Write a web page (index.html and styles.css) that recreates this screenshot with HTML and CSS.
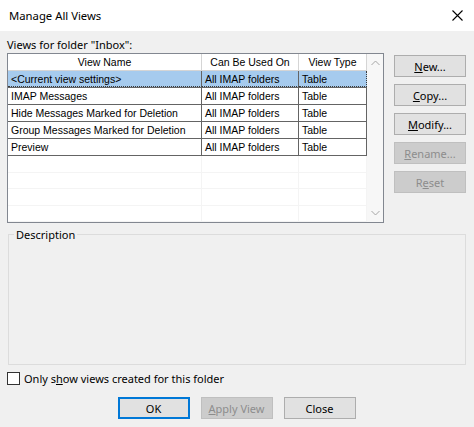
FILE: index.html
```html
<!DOCTYPE html>
<html>
<head>
<meta charset="utf-8">
<link rel="stylesheet" href="styles.css">
</head>
<body>
<div class="dialog">
  <div class="titlebar">
    <span class="title">Manage All Views</span>
    <svg class="close" width="11" height="11" viewBox="0 0 11 11"><path d="M0.5 0.5 L10.5 10.5 M10.5 0.5 L0.5 10.5" stroke="#000" stroke-width="1.1" fill="none"/></svg>
  </div>
  <div class="body">
    <div class="label">Views for folder "Inbox":</div>
    <div class="main">
      <div class="list">
        <div class="grid">
          <div class="row head">
            <div class="cell">View Name</div>
            <div class="cell">Can Be Used On</div>
            <div class="cell">View Type</div>
          </div>
          <div class="row sel">
            <div class="cell">&lt;Current view settings&gt;</div>
            <div class="cell">All IMAP folders</div>
            <div class="cell">Table</div>
          </div>
          <div class="row">
            <div class="cell">IMAP Messages</div>
            <div class="cell">All IMAP folders</div>
            <div class="cell">Table</div>
          </div>
          <div class="row">
            <div class="cell">Hide Messages Marked for Deletion</div>
            <div class="cell">All IMAP folders</div>
            <div class="cell">Table</div>
          </div>
          <div class="row">
            <div class="cell">Group Messages Marked for Deletion</div>
            <div class="cell">All IMAP folders</div>
            <div class="cell">Table</div>
          </div>
          <div class="row">
            <div class="cell">Preview</div>
            <div class="cell">All IMAP folders</div>
            <div class="cell">Table</div>
          </div>
          <div class="row empty"><div class="cell"></div><div class="cell"></div><div class="cell"></div></div>
          <div class="row empty"><div class="cell"></div><div class="cell"></div><div class="cell"></div></div>
          <div class="row empty"><div class="cell"></div><div class="cell"></div><div class="cell"></div></div>
          <div class="row empty"><div class="cell"></div><div class="cell"></div><div class="cell"></div></div>
        </div>
        <div class="scroll">
          <svg width="9" height="6" viewBox="0 0 9 6"><path d="M0.5 5 L4.5 1 L8.5 5" stroke="#a6a6a6" stroke-width="1" fill="none"/></svg>
          <svg width="9" height="6" viewBox="0 0 9 6"><path d="M0.5 1 L4.5 5 L8.5 1" stroke="#a6a6a6" stroke-width="1" fill="none"/></svg>
        </div>
      </div>
      <div class="side">
        <div class="btn"><u>N</u>ew...</div>
        <div class="btn"><u>C</u>opy...</div>
        <div class="btn"><u>M</u>odify...</div>
        <div class="btn dis"><u>R</u>ename...</div>
        <div class="btn dis">R<u>e</u>set</div>
      </div>
    </div>
    <fieldset class="group">
      <legend>Description</legend>
    </fieldset>
    <div class="check">
      <span class="box"></span>
      <span>Only s<u>h</u>ow views created for this folder</span>
    </div>
    <div class="footer">
      <div class="btn def">OK</div>
      <div class="btn dis"><u>A</u>pply View</div>
      <div class="btn">Close</div>
    </div>
  </div>
</div>
</body>
</html>
```
FILE: styles.css
```css
html, body {
  margin: 0;
  padding: 0;
}
body {
  width: 474px;
  height: 427px;
  overflow: hidden;
  background: #f0f0f0;
  font-family: "Segoe UI", "Noto Sans", sans-serif;
  font-size: 11px;
  color: #000;
}
.dialog {
  width: 474px;
  height: 427px;
  box-sizing: border-box;
  display: flex;
  flex-direction: column;
}
.titlebar {
  height: 31px;
  background: #fff;
  display: flex;
  align-items: center;
  justify-content: space-between;
  padding: 0 11px 0 9px;
  flex: none;
}
.title {
  font-size: 11.3px;
  line-height: 15px;
}
.close {
  display: block;
  margin-top: -1px;
}
.body {
  padding: 6px 8px 0 7px;
  display: flex;
  flex-direction: column;
}
.label {
  line-height: 15px;
  height: 15px;
}
.main {
  display: flex;
  margin-top: 1px;
  align-items: flex-start;
}
.list {
  width: 377px;
  height: 170px;
  box-sizing: border-box;
  border: 1px solid #828790;
  background: #fff;
  display: flex;
  overflow: hidden;
}
.grid {
  width: 359px;
  display: flex;
  flex-direction: column;
  font-family: "Liberation Sans", Tahoma, sans-serif;
  font-size: 10.5px;
}
.row {
  display: grid;
  grid-template-columns: 194px 97px 68px;
  height: 17px;
  box-sizing: border-box;
  border-bottom: 1px solid #646464;
}
.cell {
  border-right: 1px solid #646464;
  padding-left: 3px;
  line-height: 16px;
  white-space: nowrap;
  overflow: hidden;
}
.row.head {
  border-bottom: 1px solid #d5d5d5;
}
.row.head .cell {
  text-align: center;
  padding-left: 0;
  border-right: 1px solid #d5d5d5;
}
.row.sel {
  background: #a6cbee;
}
.row.sel .cell {
  border-bottom: 1px dotted #3a3a3a;
}
.row.sel .cell:last-child {
  border-right: 1px dotted #3a3a3a;
}
.row.empty {
  border-bottom: 1px solid #f4f4f4;
}
.row.empty .cell {
  border-right: 1px solid #f4f4f4;
}
.scroll {
  width: 16px;
  background: #f7f7f7;
  display: flex;
  flex-direction: column;
  justify-content: space-between;
  align-items: center;
  padding: 6px 0 6px;
  box-sizing: border-box;
}
.scroll svg {
  display: block;
}
.side {
  margin-left: 10px;
  margin-top: 2px;
  display: flex;
  flex-direction: column;
  gap: 7px;
}
.btn {
  width: 72px;
  height: 22px;
  box-sizing: border-box;
  border: 1px solid #adadad;
  background: #e1e1e1;
  display: flex;
  align-items: center;
  justify-content: center;
  line-height: 15px;
}
.btn.dis {
  background: #cccccc;
  border-color: #bfbfbf;
  color: #8c8c8c;
}
.btn.def {
  border-color: #0078d7;
  box-shadow: inset 0 0 0 1px #0078d7;
}
.group {
  margin: 4px 0 0 1px;
  padding: 0;
  width: 458px;
  height: 138px;
  box-sizing: border-box;
  border: 1px solid #dcdcdc;
  min-width: 0;
}
.group legend {
  margin-left: 5px;
  padding: 0 2px;
  line-height: 15px;
  font-size: 11px;
}
.check {
  display: flex;
  align-items: center;
  margin-top: 6px;
  height: 15px;
}
.box {
  width: 13px;
  height: 13px;
  box-sizing: border-box;
  border: 1px solid #333;
  background: #fff;
  margin-right: 4px;
}
.footer {
  display: flex;
  justify-content: center;
  gap: 11px;
  margin-top: 11px;
}
```
